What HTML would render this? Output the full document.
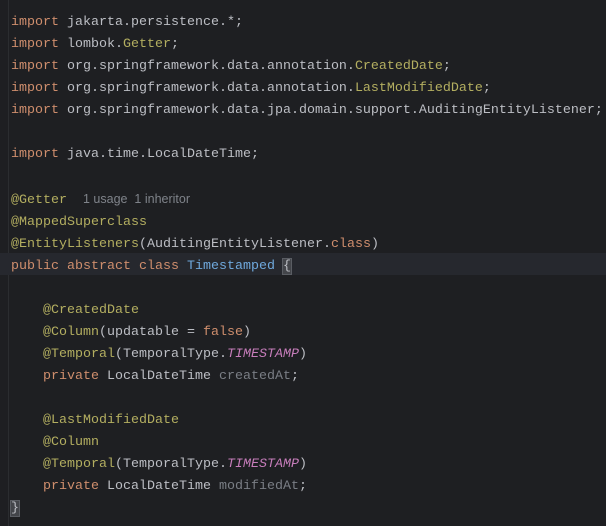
<!DOCTYPE html>
<html><head><style>
html,body{margin:0;padding:0;width:606px;height:526px;overflow:hidden;background:#1e1f22;}
.g{position:absolute;left:8px;top:0;width:1px;height:526px;background:#2b2d30;}
.hl{position:absolute;left:0;top:253px;width:606px;height:22px;background:#26282e;}
pre{position:absolute;left:11px;top:12px;margin:0;font-family:"Liberation Mono",monospace;font-size:13.33px;line-height:22px;color:#bcbec4;}
.k{color:#cf8e6d}.a{color:#b3ae60}.c{color:#6fa8dc}.f{color:#7a7e85}.p{color:#c77dbb;font-style:italic}
.h{font-family:"Liberation Sans",sans-serif;font-size:12.5px;color:#7f838a;}
.br{background:#43454a;outline:1px solid #5a5d63;}
</style></head><body>
<div class="g"></div><div class="hl"></div>
<pre><span class="k">import</span> jakarta.persistence.*;
<span class="k">import</span> lombok.<span class="a">Getter</span>;
<span class="k">import</span> org.springframework.data.annotation.<span class="a">CreatedDate</span>;
<span class="k">import</span> org.springframework.data.annotation.<span class="a">LastModifiedDate</span>;
<span class="k">import</span> org.springframework.data.jpa.domain.support.AuditingEntityListener;

<span class="k">import</span> java.time.LocalDateTime;

<span class="a">@Getter</span>  <span class="h">1 usage &nbsp;1 inheritor</span>
<span class="a">@MappedSuperclass</span>
<span class="a">@EntityListeners</span>(AuditingEntityListener.<span class="k">class</span>)
<span class="k">public abstract class</span> <span class="c">Timestamped</span> <span class="br">{</span>

    <span class="a">@CreatedDate</span>
    <span class="a">@Column</span>(updatable = <span class="k">false</span>)
    <span class="a">@Temporal</span>(TemporalType.<span class="p">TIMESTAMP</span>)
    <span class="k">private</span> LocalDateTime <span class="f">createdAt</span>;

    <span class="a">@LastModifiedDate</span>
    <span class="a">@Column</span>
    <span class="a">@Temporal</span>(TemporalType.<span class="p">TIMESTAMP</span>)
    <span class="k">private</span> LocalDateTime <span class="f">modifiedAt</span>;
<span class="br">}</span></pre>
</body></html>
